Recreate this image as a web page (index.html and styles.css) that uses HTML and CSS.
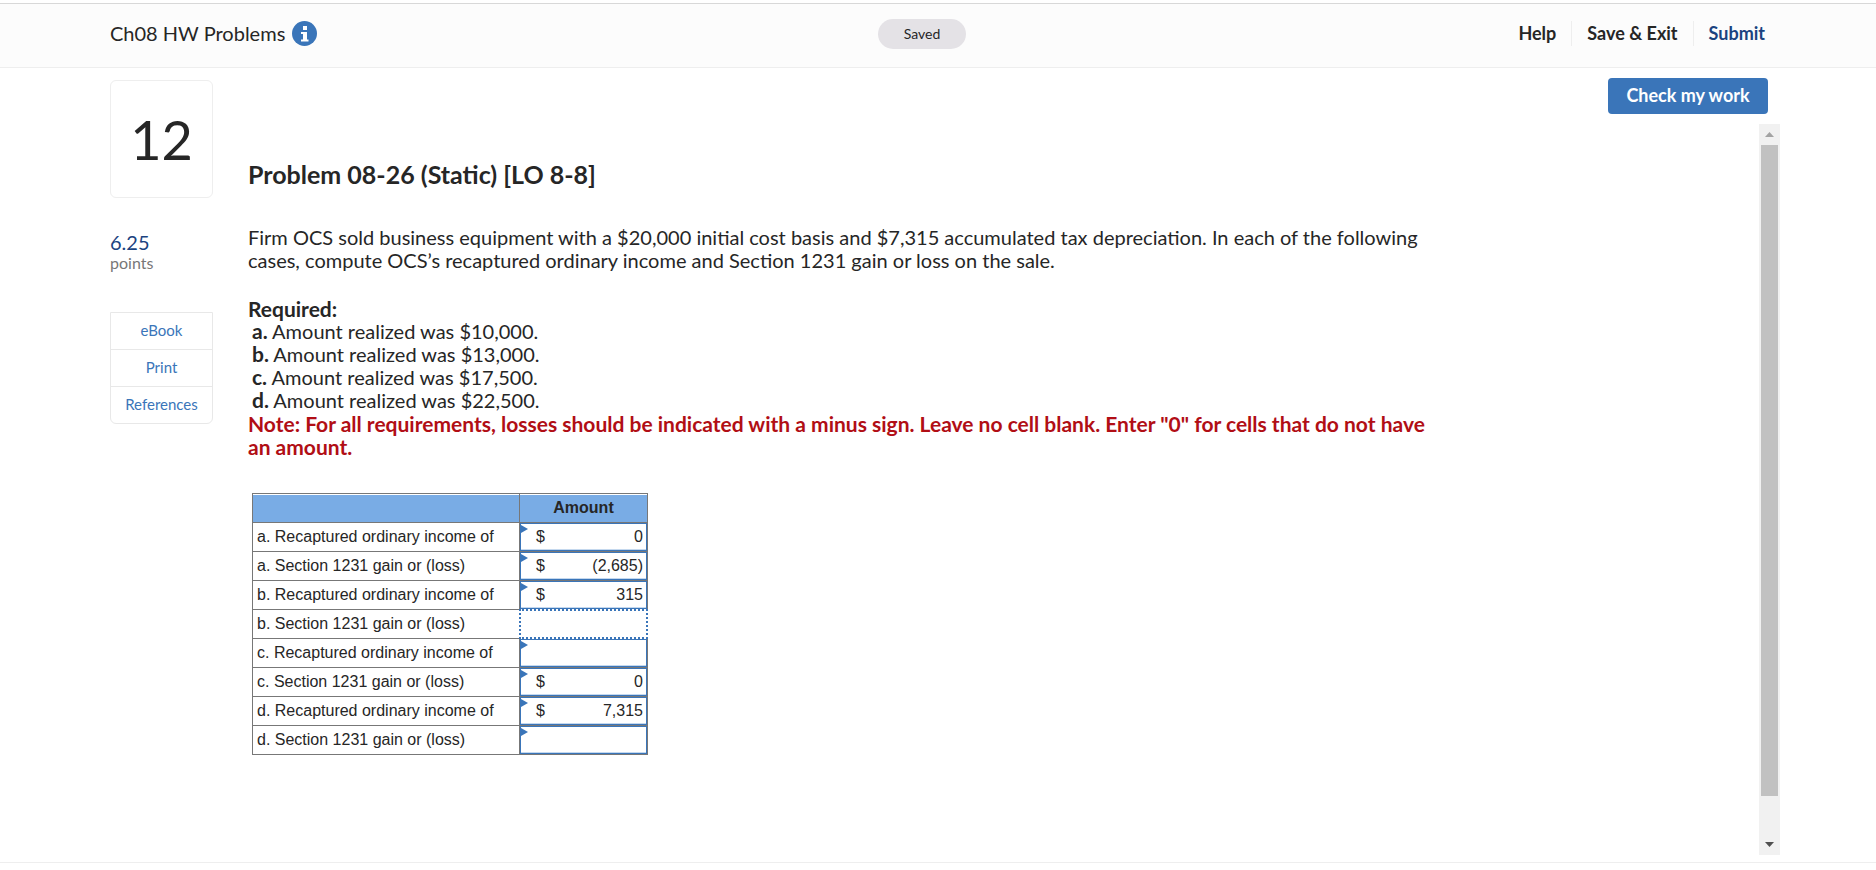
FILE: index.html
```
<!DOCTYPE html>
<html lang="en">
<head>
  <meta charset="UTF-8">
  <title>Ch08 HW Problems</title>
  <link rel="stylesheet" href="styles.css">
</head>
<body>

<header class="topbar">
  <div class="assignment">
    <h1>Ch08 HW Problems</h1>
    <button class="info" aria-label="Assignment info">
      <svg width="25" height="25" viewBox="0 0 25 25">
        <circle cx="12.5" cy="12.5" r="12.5" fill="#3a75b9"/>
        <path d="M11 5h4v4h-4zM9 11h6v7.500h1.500v2h-7.500v-2h2v-5.500h-2z" fill="#fff"/>
      </svg>
    </button>
  </div>
  <span class="saved">Saved</span>
  <nav class="actions">
    <a href="#">Help</a>
    <a href="#">Save &amp; Exit</a>
    <a href="#" class="submit">Submit</a>
  </nav>
</header>

<main>
  <aside class="sidebar">
    <div class="number">12</div>
    <div class="points">
      <span class="value">6.25</span>
      <span class="unit">points</span>
    </div>
    <nav class="tools">
      <a href="#">eBook</a>
      <a href="#">Print</a>
      <a href="#">References</a>
    </nav>
  </aside>

  <div class="workspace">
    <div class="toolbar">
      <button class="check">Check my work</button>
    </div>

    <div class="viewer">
      <section class="question">
        <h2>Problem 08-26 (Static) [LO 8-8]</h2>
        <p class="intro">Firm OCS sold business equipment with a $20,000 initial cost basis and $7,315 accumulated tax depreciation. In each of the following cases, compute OCS’s recaptured ordinary income and Section 1231 gain or loss on the sale.</p>

        <p class="bold">Required:</p>
        <ul class="parts">
          <li><b>a.</b> Amount realized was $10,000.</li>
          <li><b>b.</b> Amount realized was $13,000.</li>
          <li><b>c.</b> Amount realized was $17,500.</li>
          <li><b>d.</b> Amount realized was $22,500.</li>
        </ul>
        <p class="bold note">Note: For all requirements, losses should be indicated with a minus sign. Leave no cell blank. Enter "0" for cells that do not have an amount.</p>

        <table class="answers">
          <thead>
            <tr><th></th><th>Amount</th></tr>
          </thead>
          <tbody>
            <tr>
              <td><label for="a1">a. Recaptured ordinary income of</label></td>
              <td><div class="entry"><span>$</span><input id="a1" type="text" value="0"></div></td>
            </tr>
            <tr>
              <td><label for="a2">a. Section 1231 gain or (loss)</label></td>
              <td><div class="entry"><span>$</span><input id="a2" type="text" value="(2,685)"></div></td>
            </tr>
            <tr>
              <td><label for="b1">b. Recaptured ordinary income of</label></td>
              <td><div class="entry"><span>$</span><input id="b1" type="text" value="315"></div></td>
            </tr>
            <tr>
              <td><label for="b2">b. Section 1231 gain or (loss)</label></td>
              <td><div class="entry active"><input id="b2" type="text"></div></td>
            </tr>
            <tr>
              <td><label for="c1">c. Recaptured ordinary income of</label></td>
              <td><div class="entry"><input id="c1" type="text"></div></td>
            </tr>
            <tr>
              <td><label for="c2">c. Section 1231 gain or (loss)</label></td>
              <td><div class="entry"><span>$</span><input id="c2" type="text" value="0"></div></td>
            </tr>
            <tr>
              <td><label for="d1">d. Recaptured ordinary income of</label></td>
              <td><div class="entry"><span>$</span><input id="d1" type="text" value="7,315"></div></td>
            </tr>
            <tr>
              <td><label for="d2">d. Section 1231 gain or (loss)</label></td>
              <td><div class="entry"><input id="d2" type="text"></div></td>
            </tr>
          </tbody>
        </table>
      </section>

      <div class="scrollbar">
        <button aria-label="Scroll up">
          <svg width="9" height="5" viewBox="0 0 9 5"><path d="M0 5L4.500 0L9 5z" fill="#a3a3a3"/></svg>
        </button>
        <div class="track"><div class="thumb"></div></div>
        <button aria-label="Scroll down">
          <svg width="9" height="5" viewBox="0 0 9 5"><path d="M0 0H9L4.500 5z" fill="#505050"/></svg>
        </button>
      </div>
    </div>
  </div>
</main>

<footer></footer>

</body>
</html>
```
FILE: styles.css
```
* {
  box-sizing: border-box;
}

body {
  margin: 0;
  min-height: 100vh;
  display: flex;
  flex-direction: column;
  padding-top: 3px;
  font-family: Lato, "Open Sans", sans-serif;
  font-size: 20px;
  color: #262626;
  background-color: #fff;
}

h1, h2, p, ul {
  margin: 0;
  padding: 0;
}

a {
  text-decoration: none;
}

button {
  border: none;
  padding: 0;
  background: none;
  font-family: inherit;
  cursor: pointer;
}

/* Header */
.topbar {
  display: grid;
  grid-template-columns: 1fr auto 1fr;
  align-items: center;
  height: 65px;
  padding: 0 142px 4px 110px;
  background-color: #fcfcfc;
  border-top: 1px solid #d8d8d8;
  border-bottom: 1px solid #eee;
}

.assignment {
  display: flex;
  align-items: center;
  gap: 7px;
}

.assignment h1 {
  padding-bottom: 2px;
  font-size: 20px;
  font-weight: 400;
}

.info {
  height: 25px;
}

.saved {
  width: 88px;
  padding: 6px 0;
  border-radius: 15px;
  background-color: #e4e2e6;
  font-size: 14px;
  line-height: 18px;
  text-align: center;
}

.actions {
  display: flex;
  justify-content: flex-end;
  margin-right: -46px;
}

.actions a {
  padding: 0 15px;
  font-size: 18px;
  font-weight: 700;
  line-height: 25px;
  color: #262626;
}

.actions a + a {
  border-left: 1px solid #eee;
}

.actions .submit {
  color: #1b4380;
}

/* Question area */
main {
  flex: 1;
  display: flex;
  gap: 35px;
  padding: 10px 96px 7px 110px;
}

.sidebar {
  width: 103px;
  padding-top: 2px;
}

.number {
  height: 118px;
  border: 1px solid #eee;
  border-radius: 6px;
  font-size: 54px;
  line-height: 118px;
  text-align: center;
}

.points {
  display: flex;
  flex-direction: column;
  margin-top: 33px;
}

.points .value {
  font-size: 20px;
  line-height: 22px;
  color: #1b4380;
}

.points .unit {
  font-size: 16px;
  line-height: 20px;
  color: #777;
}

.tools {
  display: flex;
  flex-direction: column;
  margin-top: 39px;
  border: 1px solid #e8e8e8;
  border-radius: 0 0 6px 6px;
}

.tools a {
  padding-bottom: 2px;
  font-size: 15px;
  line-height: 34px;
  text-align: center;
  color: #3a75b9;
}

.tools a + a {
  border-top: 1px solid #e8e8e8;
}

.workspace {
  flex: 1;
  display: flex;
  flex-direction: column;
}

.toolbar {
  display: flex;
  justify-content: flex-end;
  margin: 0 12px 10px 0;
}

.check {
  width: 160px;
  height: 36px;
  padding-bottom: 2px;
  border-radius: 4px;
  background-color: #3a75b9;
  color: #fff;
  font-size: 18px;
  font-weight: 700;
}

.viewer {
  flex: 1;
  display: flex;
  justify-content: space-between;
}

.question {
  max-width: 1180px;
  padding-top: 35px;
  line-height: 23px;
}

.question h2 {
  font-size: 25px;
  line-height: 30px;
}

.intro {
  margin: 37px 0 25px;
}

.bold,
.parts b {
  font-size: 21px;
  font-weight: 700;
}

.parts {
  padding-left: 4px;
  list-style: none;
}

.parts b {
  line-height: 20px;
}

.note {
  color: #b10e15;
}

/* Answer table */
.answers {
  width: 396px;
  margin: 35px 0 0 4px;
  border-collapse: collapse;
  table-layout: fixed;
  font-family: "Liberation Sans", Arial, sans-serif;
  font-size: 16px;
  line-height: 20px;
}

.answers th,
.answers td {
  height: 29px;
  padding: 0;
  border: 1px solid #777;
}

.answers th {
  background-color: #79ace5;
  box-shadow: inset 0 1px #fff;
}

.answers th:last-child {
  width: 128px;
}

.answers label {
  padding-left: 4px;
}

.entry {
  position: relative;
  display: flex;
  align-items: center;
  height: 28px;
  padding: 0 3px 0 15px;
  border: 1px solid #3a75b9;
  box-shadow: inset 0 -1px #c4d8ee;
}

.entry::before {
  content: "";
  position: absolute;
  top: 1px;
  left: 0;
  border: 4px solid transparent;
  border-left: 7px solid #3a75b9;
  border-right: 0;
}

.entry input {
  flex: 1;
  min-width: 0;
  padding: 0;
  border: none;
  outline: none;
  background: none;
  font: inherit;
  color: inherit;
  text-align: right;
}

.entry.active {
  height: 30px;
  margin: -1px;
  border: 2px dotted #3a75b9;
  background-color: #fff;
  box-shadow: none;
}

.entry.active::before {
  display: none;
}

/* Scroll bar */
.scrollbar {
  display: flex;
  flex-direction: column;
  width: 21px;
  background-color: #f1f1f1;
}

.scrollbar button {
  display: flex;
  align-items: center;
  justify-content: center;
  height: 21px;
}

.track {
  flex: 1;
  padding: 0 2px;
}

.thumb {
  height: calc(100% - 38px);
  background-color: #c1c1c1;
}

footer {
  height: 8px;
  border-top: 1px solid #eee;
}
```
